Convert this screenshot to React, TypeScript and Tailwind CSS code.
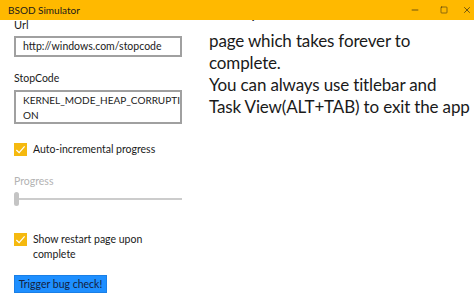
import { Minus, Square, X } from 'lucide-react';

function CheckBox({ label }: { label: React.ReactNode }) {
  return (
    <label className="flex items-start gap-[6px] text-[10.5px] leading-[15px] text-[#1a1a1a] whitespace-nowrap">
      <span className="mt-[1px] w-[13px] h-[13px] shrink-0 bg-[#f5b90f] flex items-center justify-center">
        <svg viewBox="0 0 12 12" className="w-[11px] h-[11px]">
          <polyline points="1.5,6.5 4.5,9.5 10.5,2.5" fill="none" stroke="white" strokeWidth="1.3" />
        </svg>
      </span>
      <span>{label}</span>
    </label>
  );
}

export default function App() {
  return (
    <div className="relative w-[474px] h-[305px] overflow-hidden bg-white font-['Lato',sans-serif]">
      <div className="flex gap-[27px] pl-[14px]">
        {/* settings column */}
        <div className="w-[168px] shrink-0 flex flex-col pt-[17px]">
          <span className="text-[11px] leading-[16px] text-[#1a1a1a]">Url</span>
          <div className="mt-[3px] h-[21px] border-2 border-[#a0a0a0] px-[7px] flex items-center text-[10.5px] text-[#1a1a1a] whitespace-nowrap">
            http://windows.com/stopcode
          </div>

          <span className="mt-[13px] text-[10.5px] leading-[16px] text-[#1a1a1a]">StopCode</span>
          <div className="mt-[4px] h-[34px] border-2 border-[#a0a0a0] px-[7px] py-[1px] text-[10px] leading-[15px] text-[#1a1a1a]">
            KERNEL_MODE_HEAP_CORRUPTI
            <br />
            ON
          </div>

          <div className="mt-[18px]">
            <CheckBox label="Auto-incremental progress" />
          </div>

          <span className="mt-[16px] text-[10.5px] leading-[16px] text-[#b3b3b3]">Progress</span>
          <div className="relative mt-[3px] h-[14px] flex items-center">
            <div className="w-full h-[2px] bg-[#cccccc]" />
            <div className="absolute left-0 top-0 w-[5px] h-[14px] rounded-full bg-[#c4c4c4]" />
          </div>

          <div className="mt-[26px]">
            <CheckBox
              label={
                <>
                  Show restart page upon
                  <br />
                  complete
                </>
              }
            />
          </div>

          <button className="mt-[13px] w-[93px] h-[18px] bg-[#1e8fff] border border-[#1a7fe6] text-[10.5px] leading-[16px] text-[#14213d] flex items-center justify-center whitespace-nowrap">
            Trigger bug check!
          </button>
        </div>

        {/* notes column, scrolled so the first line sits under the title bar */}
        <div className="pt-[8px] text-[17px] leading-[22px] tracking-[-0.15px] text-[#1a1a1a] whitespace-nowrap">
          <p className="-mt-[7px] mb-[7px]">Then you'll see the restart</p>
          <p>page which takes forever to</p>
          <p>complete.</p>
          <p>You can always use titlebar and</p>
          <p>Task View(ALT+TAB) to exit the app</p>
        </div>
      </div>

      {/* title bar lies over the scrolled content */}
      <div className="absolute top-0 inset-x-0 h-[20px] bg-[#ffb900] flex items-center">
        <span className="pl-[8px] text-[10px] text-[#1a1a1a]">BSOD Simulator</span>
        <div className="ml-auto flex items-center text-[#1a1a1a]">
          <span className="w-[29px] flex justify-center"><Minus size={10} strokeWidth={1.5} /></span>
          <span className="w-[29px] flex justify-center"><Square size={8} strokeWidth={1.5} /></span>
          <span className="w-[16px] flex justify-start pl-[4px]"><X size={10} strokeWidth={1.5} /></span>
        </div>
      </div>
    </div>
  );
}
